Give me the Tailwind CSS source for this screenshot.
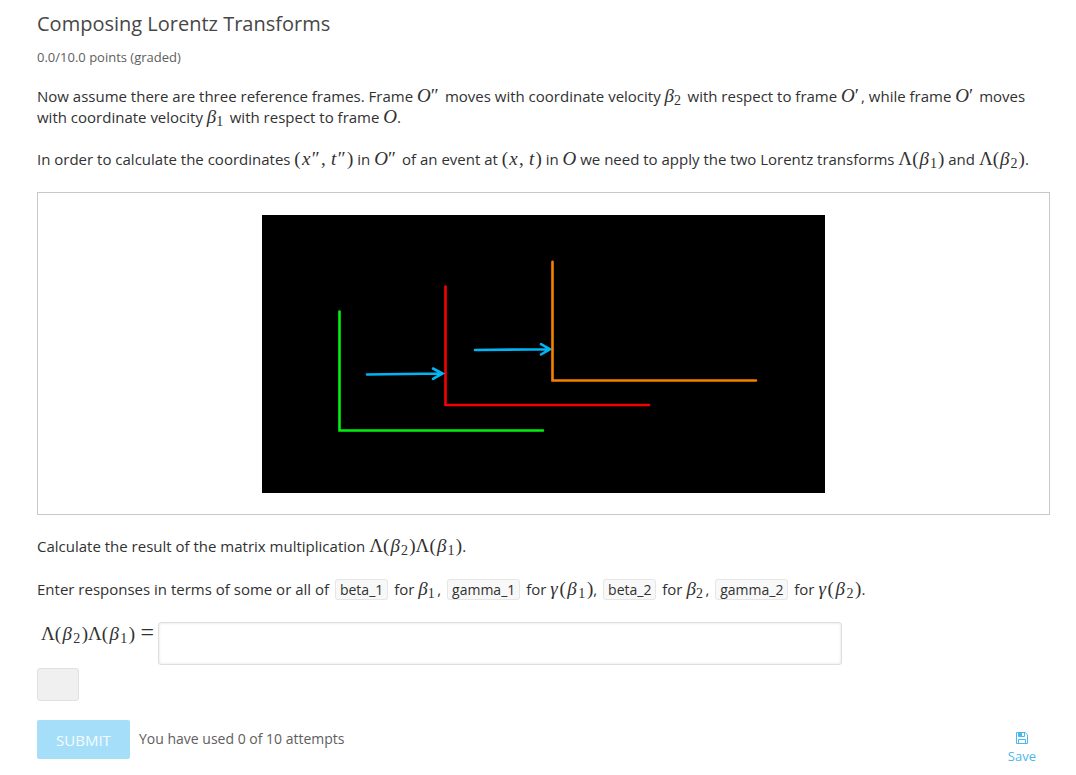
<!DOCTYPE html>
<html lang="en">
<head>
<meta charset="utf-8">
<meta name="viewport" content="width=device-width, initial-scale=1">
<title>Composing Lorentz Transforms</title>
<script src="https://cdn.jsdelivr.net/npm/@tailwindcss/browser@4"></script>
</head>
<body class="bg-white font-['Open_Sans',sans-serif] text-[15px] leading-[21px] text-[#313131]">
<main class="pt-3 pr-[26px] pl-[37px]">
  <h1 class="text-[20px] leading-6 text-[#474747]">Composing Lorentz Transforms</h1>
  <p class="mt-[11px] text-[13px] leading-5 text-[#5e5e5e]">0.0/10.0 points (graded)</p>

  <p class="mt-[19px]">Now assume there are three reference frames. Frame <span class="inline-block w-6 font-['Liberation_Serif',serif] text-[19px] leading-4 whitespace-nowrap"><i>O</i>″</span> moves with coordinate velocity <span class="inline-block w-[19px] font-['Liberation_Serif',serif] text-[19px] leading-4 whitespace-nowrap"><i>β</i><sub class="-bottom-[3px] text-[14px]">2</sub></span> with respect to frame <span class="inline-block w-5 font-['Liberation_Serif',serif] text-[19px] leading-4 whitespace-nowrap"><i>O</i>′</span>, while frame <span class="inline-block w-5 font-['Liberation_Serif',serif] text-[19px] leading-4 whitespace-nowrap"><i>O</i>′</span> moves with coordinate velocity <span class="inline-block w-[19px] font-['Liberation_Serif',serif] text-[19px] leading-4 whitespace-nowrap"><i>β</i><sub class="-bottom-[3px] text-[14px]">1</sub></span> with respect to frame <span class="inline-block font-['Liberation_Serif',serif] text-[19px] leading-4 whitespace-nowrap"><i>O</i></span>.</p>

  <p class="mt-[21px]">In order to calculate the coordinates <span class="inline-flex w-[59px] items-baseline justify-between font-['Liberation_Serif',serif] text-[19px] leading-4 whitespace-nowrap">(<i>x</i>″<span class="mr-1">,</span><i>t</i>″<span>)</span></span> in <span class="inline-block w-6 font-['Liberation_Serif',serif] text-[19px] leading-4 whitespace-nowrap"><i>O</i>″</span> of an event at <span class="inline-flex w-10 items-baseline justify-between font-['Liberation_Serif',serif] text-[19px] leading-4 whitespace-nowrap">(<i>x</i><span class="mr-1">,</span><i>t</i>)</span> in <span class="inline-block font-['Liberation_Serif',serif] text-[19px] leading-4 whitespace-nowrap"><i>O</i></span> we need to apply the two Lorentz transforms <span class="inline-flex w-[46px] items-baseline justify-between font-['Liberation_Serif',serif] text-[19px] leading-4 whitespace-nowrap">Λ(<i>β</i><sub class="-bottom-[3px] text-[14px]">1</sub>)</span> and <span class="inline-flex w-[46px] items-baseline justify-between font-['Liberation_Serif',serif] text-[19px] leading-4 whitespace-nowrap">Λ(<i>β</i><sub class="-bottom-[3px] text-[14px]">2</sub>)</span>.</p>

  <figure class="mt-[22px] flex justify-center border border-[#c8c8c8] px-5 pt-[22px] pb-[21px]">
    <svg class="block h-auto w-full max-w-[563px]" viewBox="0 0 563 278" role="img" aria-label="Three reference frames moving relative to each other">
      <rect width="563" height="278" fill="#000"/>
      <g fill="none" stroke-width="2.6" stroke-linecap="round" stroke-linejoin="miter">
        <path d="M77.500 96.500V215.500H281" stroke="#00f010"/>
        <path d="M183.500 71.500V190H387" stroke="#f80000"/>
        <path d="M105 159.500L180 158.500M171 153.500L180.500 158.500L171 163.800" stroke="#00b4f5"/>
        <path d="M213 135L287 134.200M279 129.200L288 134.200L279 139.500" stroke="#00b4f5"/>
        <path d="M290.500 46.800V165.500H494" stroke="#f88000"/>
      </g>
    </svg>
  </figure>

  <p class="mt-[21px]">Calculate the result of the matrix multiplication <span class="inline-flex w-[93px] items-baseline justify-between font-['Liberation_Serif',serif] text-[19px] leading-4 whitespace-nowrap">Λ(<i>β</i><sub class="-bottom-[3px] text-[14px]">2</sub>)Λ(<i>β</i><sub class="-bottom-[3px] text-[14px]">1</sub>)</span>.</p>

  <p class="mt-[22px]">Enter responses in terms of some or all of <code class="mx-0.5 rounded-[3px] border border-[#e6e6e6] bg-[#f8f8f8] px-1 font-['Open_Sans',sans-serif] text-[14px]">beta_1</code> for <span class="inline-block w-[19px] font-['Liberation_Serif',serif] text-[19px] leading-4 whitespace-nowrap"><i>β</i><sub class="-bottom-[3px] text-[14px]">1</sub></span>, <code class="mx-0.5 rounded-[3px] border border-[#e6e6e6] bg-[#f8f8f8] px-1 font-['Open_Sans',sans-serif] text-[14px]">gamma_1</code> for <span class="inline-flex w-[43px] items-baseline justify-between font-['Liberation_Serif',serif] text-[19px] leading-4 whitespace-nowrap"><i>γ</i>(<i>β</i><sub class="-bottom-[3px] text-[14px]">1</sub>)</span>, <code class="mx-0.5 rounded-[3px] border border-[#e6e6e6] bg-[#f8f8f8] px-1 font-['Open_Sans',sans-serif] text-[14px]">beta_2</code> for <span class="inline-block w-[19px] font-['Liberation_Serif',serif] text-[19px] leading-4 whitespace-nowrap"><i>β</i><sub class="-bottom-[3px] text-[14px]">2</sub></span>, <code class="mx-0.5 rounded-[3px] border border-[#e6e6e6] bg-[#f8f8f8] px-1 font-['Open_Sans',sans-serif] text-[14px]">gamma_2</code> for <span class="inline-flex w-[43px] items-baseline justify-between font-['Liberation_Serif',serif] text-[19px] leading-4 whitespace-nowrap"><i>γ</i>(<i>β</i><sub class="-bottom-[3px] text-[14px]">2</sub>)</span>.</p>

  <form>
    <div class="mt-[22px] flex items-start pl-1">
      <label for="answer" class="mr-1 flex w-[113px] shrink-0 items-baseline justify-between font-['Liberation_Serif',serif] text-[19px] leading-5 whitespace-nowrap">Λ(<i>β</i><sub class="-bottom-[3px] text-[14px]">2</sub>)Λ(<i>β</i><sub class="-bottom-[3px] text-[14px]">1</sub>)<span class="ml-1 text-[24px]">=</span></label>
      <input id="answer" type="text" class="h-[43px] w-full max-w-[684px] rounded-[3px] border border-[#dedede] bg-white px-3 shadow-[inset_0_0_3px_rgba(0,0,0,0.12)]">
    </div>
    <button type="button" aria-label="Preview" class="mt-[3px] block h-[33px] w-[42px] rounded-[3px] border border-[#e0e0e0] bg-[#f0f0f0]"></button>
    <div class="mt-[19px] flex items-start">
      <button type="submit" disabled class="h-[39px] w-[93px] rounded-[2px] bg-[#a5def8] pt-0.5 text-[15px] font-medium text-[#f4fbff]">SUBMIT</button>
      <p class="mt-2 ml-[9px] text-[14px] text-[#5e5e5e]">You have used 0 of 10 attempts</p>
      <button type="button" class="mt-3 mr-3 ml-auto flex flex-col items-center gap-0.5 px-0.5 text-[13px] leading-5 text-[#4ab8ec]">
        <svg class="h-3 w-3" viewBox="0 0 12 12" fill="none" stroke="currentColor" aria-hidden="true">
          <path d="M0.500 0.500H9.200L11.500 2.800V11.500H0.500Z"/>
          <path d="M2.500 11.500V7.500H9.500V11.500"/>
          <path d="M2.500 0.500V4.500H8.500V0.500"/>
          <path d="M3 1H6V4H3Z" fill="currentColor" stroke="none"/>
        </svg>
        Save
      </button>
    </div>
  </form>
</main>
</body>
</html>
